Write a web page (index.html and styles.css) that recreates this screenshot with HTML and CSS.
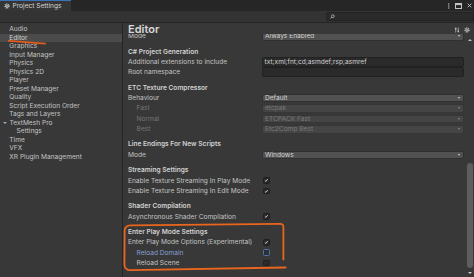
FILE: index.html
```html
<!DOCTYPE html>
<html lang="en">

<head>
    <meta charset="UTF-8">
    <meta name="viewport" content="width=device-width, initial-scale=1.0">
    <title>Project Settings</title>
    <link rel="stylesheet" href="styles.css">
</head>

<body>
    <div class="tabbar">
        <div class="tab">
            <svg viewBox="0 0 10 10">
                <circle cx="5" cy="5" r="3.4" fill="none" stroke="#d2d2d2" stroke-width="2.2" stroke-dasharray="1.4 1.27"/>
                <circle cx="5" cy="5" r="2.7" fill="#d2d2d2"/>
                <circle cx="5" cy="5" r="1.1" fill="#383838"/>
            </svg>
            <span>Project Settings</span>
        </div>
        <div class="win-btns">
            <svg class="kebab" viewBox="0 0 2 7"><circle cx="1" cy="1" r=".8"/><circle cx="1" cy="3.5" r=".8"/><circle cx="1" cy="6" r=".8"/></svg>
            <svg class="maxi" viewBox="0 0 7 6"><rect x=".5" y=".5" width="6" height="5" fill="none" stroke="#c4c4c4"/><rect x=".5" y=".5" width="6" height="1.6" fill="#c4c4c4"/></svg>
            <svg class="close" viewBox="0 0 6 6"><path d="M.8 .8 5.2 5.2M5.2 .8 .8 5.2" stroke="#c4c4c4" stroke-width="1.1"/></svg>
        </div>
    </div>

    <div class="toolbar">
        <div class="search">
            <svg viewBox="0 0 6 6"><circle cx="3.4" cy="2.6" r="1.7" fill="none" stroke="#bdbdbd" stroke-width=".9"/><path d="M2.2 3.8 .6 5.4" stroke="#bdbdbd" stroke-width="1"/></svg>
        </div>
    </div>

    <div class="main">
        <ul class="nav">
            <li>Audio</li>
            <li class="sel">Editor</li>
            <li>Graphics</li>
            <li>Input Manager</li>
            <li>Physics</li>
            <li>Physics 2D</li>
            <li>Player</li>
            <li>Preset Manager</li>
            <li>Quality</li>
            <li>Script Execution Order</li>
            <li>Tags and Layers</li>
            <li class="fold"><i class="tri"></i>TextMesh Pro</li>
            <li class="child">Settings</li>
            <li>Time</li>
            <li>VFX</li>
            <li>XR Plugin Management</li>
        </ul>

        <div class="inspector">
            <div class="ins-head">
                <h1>Editor</h1>
                <div class="head-icons">
                    <svg viewBox="0 0 6 7"><path d="M1.5 .5v6M4.5 .5v6" stroke="#c4c4c4" stroke-width=".8"/><rect x=".6" y="1.2" width="1.8" height="1.6" fill="#c4c4c4"/><rect x="3.6" y="4" width="1.8" height="1.6" fill="#c4c4c4"/></svg>
                    <svg viewBox="0 0 10 10">
                        <circle cx="5" cy="5" r="3.4" fill="none" stroke="#c4c4c4" stroke-width="2.2" stroke-dasharray="1.4 1.27"/>
                        <circle cx="5" cy="5" r="2.7" fill="#c4c4c4"/>
                        <circle cx="5" cy="5" r="1.1" fill="#383838"/>
                    </svg>
                </div>
            </div>

            <div class="ins-body">
                <div class="content">
                    <div class="content-inner">
                        <div class="row">
                            <span class="label">Mode</span>
                            <div class="dropdown"><span>Always Enabled</span><i class="caret"></i></div>
                        </div>

                        <div class="section">
                            <div class="row head"><span class="label">C# Project Generation</span></div>
                            <div class="row">
                                <span class="label">Additional extensions to include</span>
                                <div class="text">txt;xml;fnt;cd;asmdef;rsp;asmref</div>
                            </div>
                            <div class="row">
                                <span class="label">Root namespace</span>
                                <div class="text"></div>
                            </div>
                        </div>

                        <div class="section">
                            <div class="row head"><span class="label">ETC Texture Compressor</span></div>
                            <div class="row">
                                <span class="label">Behaviour</span>
                                <div class="dropdown"><span>Default</span><i class="caret"></i></div>
                            </div>
                            <div class="row sub off">
                                <span class="label">Fast</span>
                                <div class="dropdown off"><span>etcpak</span><i class="caret"></i></div>
                            </div>
                            <div class="row sub off">
                                <span class="label">Normal</span>
                                <div class="dropdown off"><span>ETCPACK Fast</span><i class="caret"></i></div>
                            </div>
                            <div class="row sub off">
                                <span class="label">Best</span>
                                <div class="dropdown off"><span>Etc2Comp Best</span><i class="caret"></i></div>
                            </div>
                        </div>

                        <div class="section">
                            <div class="row head"><span class="label">Line Endings For New Scripts</span></div>
                            <div class="row">
                                <span class="label">Mode</span>
                                <div class="dropdown"><span>Windows</span><i class="caret"></i></div>
                            </div>
                        </div>

                        <div class="section">
                            <div class="row head"><span class="label">Streaming Settings</span></div>
                            <div class="row">
                                <span class="label">Enable Texture Streaming In Play Mode</span>
                                <span class="check on"><svg viewBox="0 0 8 8"><path d="M1.6 4.3 3.3 5.9 6.5 2" fill="none" stroke="#ececec" stroke-width="1.4"/></svg></span>
                            </div>
                            <div class="row">
                                <span class="label">Enable Texture Streaming In Edit Mode</span>
                                <span class="check on"><svg viewBox="0 0 8 8"><path d="M1.6 4.3 3.3 5.9 6.5 2" fill="none" stroke="#ececec" stroke-width="1.4"/></svg></span>
                            </div>
                        </div>

                        <div class="section">
                            <div class="row head"><span class="label">Shader Compilation</span></div>
                            <div class="row">
                                <span class="label">Asynchronous Shader Compilation</span>
                                <span class="check on"><svg viewBox="0 0 8 8"><path d="M1.6 4.3 3.3 5.9 6.5 2" fill="none" stroke="#ececec" stroke-width="1.4"/></svg></span>
                            </div>
                        </div>

                        <div class="section">
                            <div class="row head"><span class="label">Enter Play Mode Settings</span></div>
                            <div class="row">
                                <span class="label">Enter Play Mode Options (Experimental)</span>
                                <span class="check on"><svg viewBox="0 0 8 8"><path d="M1.6 4.3 3.3 5.9 6.5 2" fill="none" stroke="#ececec" stroke-width="1.4"/></svg></span>
                            </div>
                            <div class="row sub hover">
                                <span class="label">Reload Domain</span>
                                <span class="check focus"></span>
                            </div>
                            <div class="row sub">
                                <span class="label">Reload Scene</span>
                                <span class="check"></span>
                            </div>
                        </div>
                    </div>
                </div>

                <div class="scrollbar">
                    <div class="sb-up"><i></i></div>
                    <div class="sb-track"><div class="sb-thumb"></div></div>
                    <div class="sb-down"><i></i></div>
                </div>
            </div>
        </div>
    </div>

    <!-- marker annotations drawn over the screenshot -->
    <svg class="annot" viewBox="0 0 474 277">
        <path d="M8.6 40.9 L45.2 43.6" stroke="#e45a1c" stroke-width="1.6" stroke-linecap="round" fill="none"/>
        <path d="M283.4 259.5 L283.4 227.2 Q283.4 223.7 280 223.8 L130.5 225.4 Q124.8 225.6 124.6 231 L124.4 264.5 Q124.6 270.2 130.5 270.2 L285.6 267.5" stroke="#ea661f" stroke-width="1.8" stroke-linecap="round" stroke-linejoin="round" fill="none"/>
    </svg>
</body>

</html>
```

FILE: styles.css
```css
* {
    margin: 0px;
    padding: 0px;
    box-sizing: border-box;
}

body {
    width: 474px;
    height: 277px;
    overflow: hidden;
    position: relative;
    background-color: #383838;
    font-family: Inter, "Noto Sans", sans-serif;
    font-size: 6.6px;
    color: #c4c4c4;
}

/* window tab bar */
.tabbar {
    height: 11px;
    background-color: #262626;
    display: flex;
}

.tab {
    width: 71px;
    background-color: #353535;
    border-top: 1px solid #3a72b8;
    display: flex;
    align-items: center;
    gap: 3px;
    padding-left: 3.5px;
    color: #d4d4d4;
}

.tab svg {
    width: 6px;
    height: 6px;
}

.win-btns {
    margin-left: auto;
    display: flex;
    align-items: center;
    padding-right: 2px;
}

.win-btns .kebab {
    width: 1.6px;
    height: 6px;
    fill: #c4c4c4;
    margin-right: 4.5px;
}

.win-btns .maxi {
    width: 7px;
    height: 6px;
    margin-right: 5.5px;
}

.win-btns .close {
    width: 5px;
    height: 5px;
}

/* toolbar with search */
.toolbar {
    height: 12px;
    background-color: #333333;
    border-bottom: 1px solid #232323;
    display: flex;
    justify-content: flex-end;
    padding-top: 1px;
}

.search {
    width: 148px;
    height: 9px;
    background-color: #2a2a2a;
    border: 1px solid #232323;
    border-radius: 2px 0 0 2px;
    display: flex;
    align-items: center;
    padding-left: 2.5px;
}

.search svg {
    width: 5px;
    height: 5px;
}

.main {
    display: flex;
    height: 254px;
}

/* left settings list */
.nav {
    width: 123px;
    flex: none;
    border-right: 1px solid #242424;
    list-style: none;
    padding-top: 2px;
}

.nav li {
    height: 8.5px;
    line-height: 8.5px;
    padding-left: 9.3px;
    white-space: nowrap;
}

.nav .sel {
    background-color: #4b4b4b;
    color: #d6d6d6;
}

.nav .fold {
    padding-left: 2.6px;
    display: flex;
    align-items: center;
}

.nav .tri {
    width: 0;
    height: 0;
    border-left: 2px solid transparent;
    border-right: 2px solid transparent;
    border-top: 2.6px solid #a8a8a8;
    margin-right: 3px;
}

.nav .child {
    padding-left: 16.6px;
}

/* inspector */
.inspector {
    flex: 1;
    display: flex;
    flex-direction: column;
    min-width: 0;
}

.ins-head {
    height: 11px;
    flex: none;
    display: flex;
    align-items: center;
    padding-left: 5px;
    padding-right: 4px;
}

.ins-head h1 {
    font-size: 11px;
    line-height: 11px;
    font-weight: 600;
    color: #d8d8d8;
    padding-top: 1px;
}

.head-icons {
    margin-left: auto;
    display: flex;
    align-items: center;
    gap: 4px;
    margin-top: 2px;
}

.head-icons svg {
    width: 6px;
    height: 6px;
}

.ins-body {
    flex: 1;
    display: flex;
    min-height: 0;
}

.content {
    flex: 1;
    overflow: hidden;
}

.content-inner {
    margin-top: -2.9px;
}

.section {
    margin-top: 4.9px;
}

.row {
    height: 10.4px;
    display: flex;
    align-items: center;
    padding-left: 5px;
    padding-right: 2px;
}

.row .label {
    width: 134px;
    flex: none;
    white-space: nowrap;
}

.row.head .label {
    font-weight: 600;
    color: #d2d2d2;
}

.row.sub .label {
    padding-left: 8.6px;
}

.row.off .label {
    color: #767676;
}

.row.hover .label {
    color: #879fd4;
}

.dropdown {
    flex: 1;
    height: 8.6px;
    background-color: #515151;
    border: 1px solid #303030;
    border-radius: 2px;
    display: flex;
    align-items: center;
    justify-content: space-between;
    padding: 0 2.6px 0 2px;
    color: #d0d0d0;
    white-space: nowrap;
}

.dropdown.off {
    background-color: #454545;
    border-color: #363636;
    color: #7a7a7a;
}

.caret {
    width: 0;
    height: 0;
    border-left: 1.7px solid transparent;
    border-right: 1.7px solid transparent;
    border-top: 2.2px solid #cfcfcf;
}

.dropdown.off .caret {
    border-top-color: #8a8a8a;
}

.text {
    flex: 1;
    height: 9.8px;
    background-color: #2a2a2a;
    border: 1px solid #212121;
    border-radius: 2px;
    display: flex;
    align-items: center;
    padding-left: 1.5px;
    color: #d2d2d2;
    white-space: nowrap;
}

.check {
    width: 6.6px;
    height: 6.6px;
    margin-left: 1px;
    background-color: #2a2a2a;
    border: 1px solid #1f1f1f;
    border-radius: 1.5px;
    display: flex;
}

.check svg {
    width: 100%;
    height: 100%;
}

.check.focus {
    border-color: #4b74ad;
    background-color: #2f2f2f;
}

/* scrollbar */
.scrollbar {
    width: 8px;
    flex: none;
    display: flex;
    flex-direction: column;
}

.sb-up,
.sb-down {
    display: flex;
    justify-content: center;
    align-items: center;
    flex: none;
}

.sb-up {
    height: 12px;
}

.sb-down {
    height: 9px;
}

.sb-up i {
    width: 0;
    height: 0;
    border-left: 2px solid transparent;
    border-right: 2px solid transparent;
    border-bottom: 2.5px solid #bdbdbd;
}

.sb-down i {
    width: 0;
    height: 0;
    border-left: 2px solid transparent;
    border-right: 2px solid transparent;
    border-top: 2.5px solid #d0d0d0;
}

.sb-track {
    flex: 1;
    display: flex;
    flex-direction: column;
    justify-content: flex-end;
    padding: 0 1px;
}

.sb-thumb {
    height: 105px;
    background-color: #5e5e5e;
    border-radius: 3px;
}

/* hand-drawn marks over the page */
.annot {
    position: absolute;
    left: 0;
    top: 0;
    width: 474px;
    height: 277px;
    pointer-events: none;
}
```
